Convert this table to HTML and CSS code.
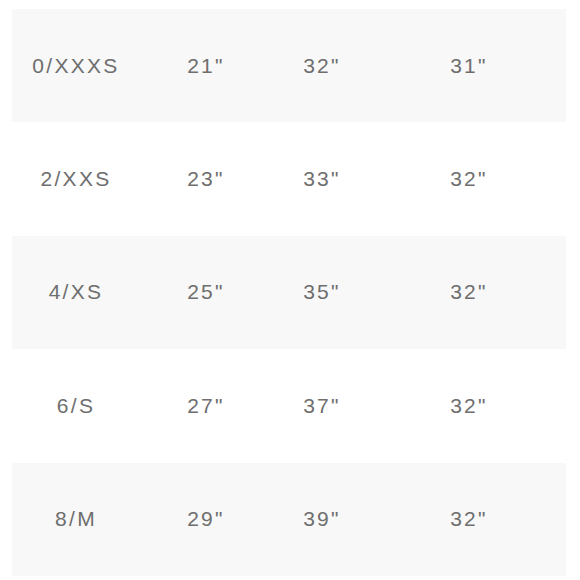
FILE: index.html
```
<!DOCTYPE html>
<html>
<head>
<meta charset="utf-8">
<link rel="stylesheet" href="styles.css">
</head>
<body>
<div class="sizes">
  <div class="row shaded"><span>0/XXXS</span><span>21"</span><span>32"</span><span>31"</span></div>
  <div class="row"><span>2/XXS</span><span>23"</span><span>33"</span><span>32"</span></div>
  <div class="row shaded"><span>4/XS</span><span>25"</span><span>35"</span><span>32"</span></div>
  <div class="row"><span>6/S</span><span>27"</span><span>37"</span><span>32"</span></div>
  <div class="row shaded"><span>8/M</span><span>29"</span><span>39"</span><span>32"</span></div>
</div>
</body>
</html>
```
FILE: styles.css
```
html, body {
  margin: 0;
  background: #ffffff;
}
.sizes {
  padding: 9px 14px 0 12px;
  font-family: "Liberation Sans", Arial, sans-serif;
  font-size: 21px;
  color: #6e6e6e;
  letter-spacing: 2.3px;
}
.row {
  display: grid;
  grid-template-columns: 126px 134px 98px 196px;
  height: 113.4px;
  align-items: center;
}
.row span {
  text-align: center;
  padding-left: 2px;
}
.shaded {
  background: #f8f8f8;
}
```
